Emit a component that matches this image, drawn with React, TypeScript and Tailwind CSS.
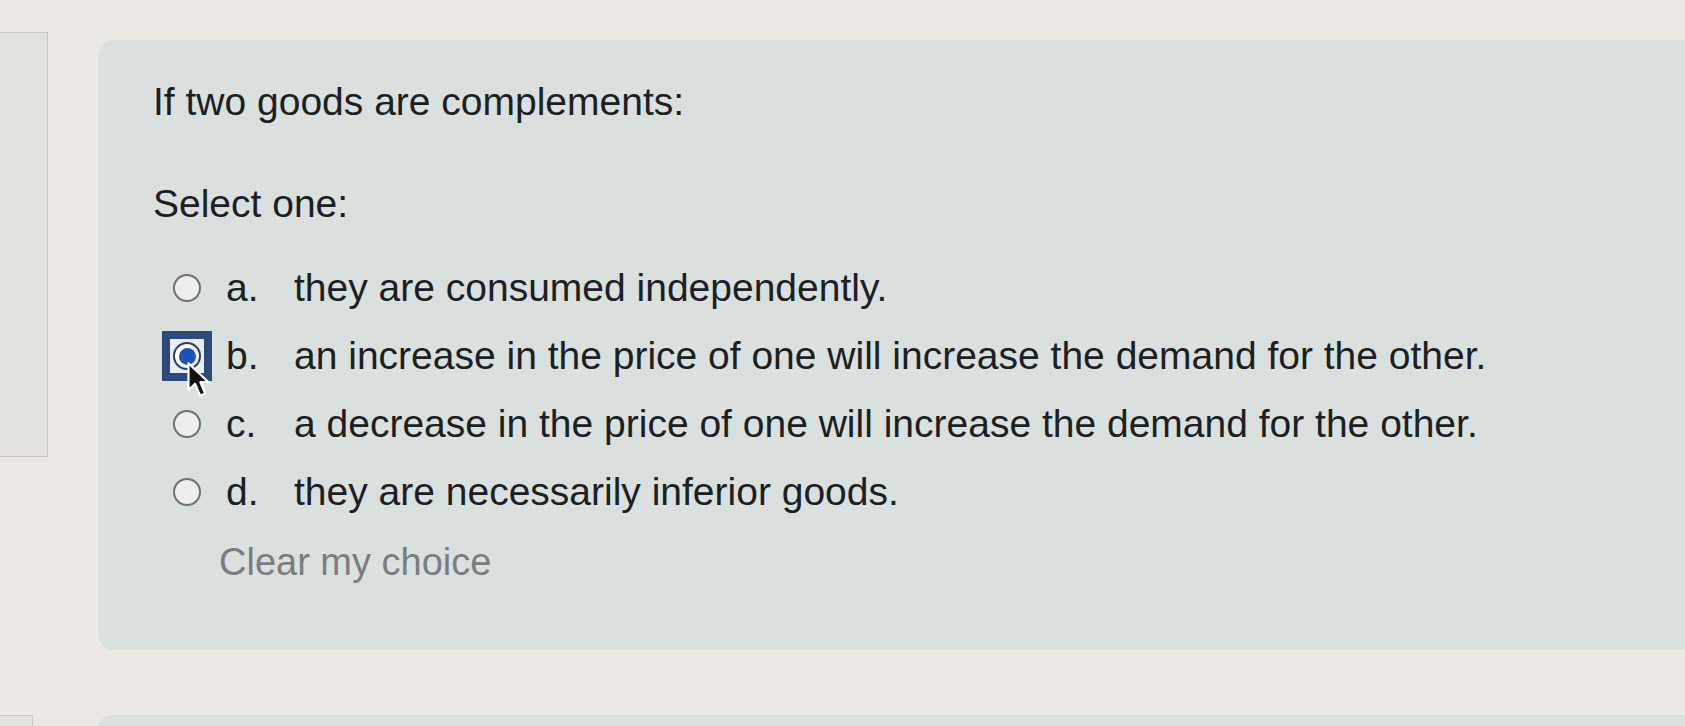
const options = [
  { key: "a.", text: "they are consumed independently." },
  { key: "b.", text: "an increase in the price of one will increase the demand for the other." },
  { key: "c.", text: "a decrease in the price of one will increase the demand for the other." },
  { key: "d.", text: "they are necessarily inferior goods." },
];

function Radio({ checked }: { checked: boolean }) {
  if (!checked) {
    return <span className="block w-[28px] h-[28px] rounded-full border-2 border-[#6f7172] bg-[#eeeeec]" />;
  }
  return (
    <span className="relative flex w-[50px] h-[50px] items-center justify-center border-[8px] border-[#2d4a7c] bg-[#e7edf3]">
      <span className="flex w-[28px] h-[28px] items-center justify-center rounded-full border-2 border-[#26406f] bg-white">
        <span className="block w-[17px] h-[17px] rounded-full bg-[#1f4fbd]" />
      </span>
      <svg className="absolute left-[16px] top-[22px]" width="25" height="38" viewBox="0 0 22 34">
        <path d="M2 2 L2 26 L8 20.5 L12.5 31 L17 29 L12.7 19 L20 19 Z" fill="#111" stroke="#fff" strokeWidth="2" strokeLinejoin="round" />
      </svg>
    </span>
  );
}

export default function App() {
  return (
    <div
      className="relative h-[726px] w-[1685px] overflow-hidden bg-[#ece9e4] text-[#1b2024]"
      style={{ fontFamily: '"Liberation Sans", Arial, sans-serif' }}
    >
      <div className="flex items-start pt-[32px]">
        <div className="w-[48px] h-[425px] shrink-0 border border-l-0 border-[#c9c8c5] bg-[#e3e1dd]" />

        <div className="mt-[8px] ml-[50px] w-[1620px] shrink-0 rounded-[16px] bg-[#dae0de] pl-[55px] pt-[39px] pb-[65px]">
          <p className="text-[39px] leading-[46px]">If two goods are complements:</p>
          <p className="mt-[56px] text-[39px] leading-[46px]">Select one:</p>

          <div className="mt-[27px]">
            {options.map((o, i) => (
              <div key={o.key} className="flex h-[68px] items-center">
                <div className="flex w-[68px] justify-center">
                  <Radio checked={i === 1} />
                </div>
                <span className="ml-[5px] w-[68px] text-[39px] leading-[46px]">{o.key}</span>
                <span className="text-[39px] leading-[46px]">{o.text}</span>
              </div>
            ))}
          </div>

          <p className="mt-[13px] ml-[66px] text-[38px] leading-[46px] text-[#7a7d7f]">Clear my choice</p>
        </div>
      </div>

      <div className="mt-[65px] flex items-start">
        <div className="w-[33px] h-[40px] shrink-0 border border-l-0 border-[#c9c8c5] bg-[#e3e1dd]" />
        <div className="ml-[64px] h-[60px] w-[1620px] shrink-0 rounded-t-[16px] bg-[#d9dfdd]" />
      </div>
    </div>
  );
}
